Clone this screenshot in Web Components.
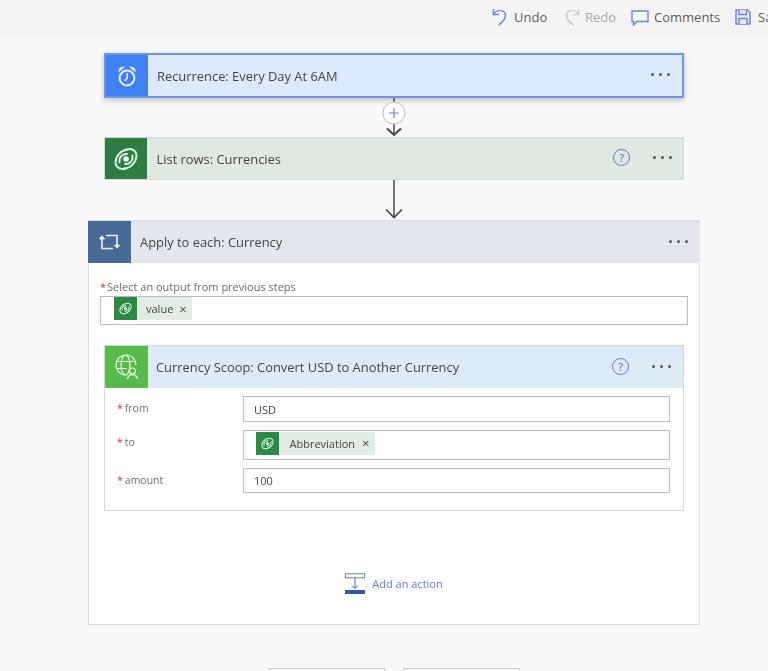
<!DOCTYPE html>
<html lang="en"><head><meta charset="utf-8"><title>Flow</title>
<style>
html,body{margin:0;height:671px;overflow:hidden;background:#f9f9f9;font-family:"Open Sans","Noto Sans",sans-serif;color:#4a4a4a}
</style></head><body>
<flow-app>
  <flow-toolbar slot="bar"></flow-toolbar>
  <flow-card color="#dfe9fd" tile="#4080f5" title-text="Recurrence: Every Day At 6AM" selected icon="clock"></flow-card>
  <flow-connector plus></flow-connector>
  <flow-card color="#deeae1" tile="#2b7d41" title-text="List rows: Currencies" help icon="dv"></flow-card>
  <flow-connector></flow-connector>
  <flow-scope>
    <flow-field-label>Select an output from previous steps</flow-field-label>
    <flow-input wide><flow-token tight>value</flow-token></flow-input>
    <flow-card slot="inner" color="#dfeaf8" tile="#56bb4b" title-text="Currency Scoop: Convert USD to Another Currency" help icon="globe" flat>
      <flow-form>
        <flow-row label="from" top="8"><flow-input h="26">USD</flow-input></flow-row>
        <flow-row label="to" top="8"><flow-input h="30" token><flow-token>Abbreviation</flow-token></flow-input></flow-row>
        <flow-row label="amount" top="8"><flow-input h="25">100</flow-input></flow-row>
      </flow-form>
    </flow-card>
    <flow-add slot="add"></flow-add>
  </flow-scope>
  <flow-footer></flow-footer>
</flow-app>
<script>
const ICONS={
clock:`<svg width="24" height="24" viewBox="0 0 24 24" fill="none" stroke="#e4efff" stroke-width="2"><circle cx="12" cy="14" r="7.4"/><path d="M12.2 9V14.3L9.6 17" stroke-width="1.5"/><path d="M4.4 6.6C4.6 4.8 6 3.6 7.8 3.6ZM19.6 6.6C19.4 4.8 18 3.6 16.2 3.6Z" stroke-width="1.6" fill="#e4efff"/></svg>`,
dv:`<svg width="100%" height="100%" viewBox="0 0 28 28" fill="none" stroke="#dff2e4" stroke-width="1.9" stroke-linecap="round"><path d="M13.5 23.5C8.5 25 3.5 22.5 3.5 17.5C3.5 11.5 9 5 15.5 4.5"/><path d="M14.5 4.5C19.5 3 24.5 5.5 24.5 10.5C24.5 16.5 19 23 12.5 23.5"/><path d="M7.5 17.5C6.5 12.5 10.5 8.5 15 9"/><path d="M20.5 10.5C21.5 15.5 17.5 19.5 13 19"/><circle cx="14" cy="14" r="2.8" fill="#f2fbf4" stroke="none"/></svg>`,
globe:`<svg width="26" height="26" viewBox="0 0 26 26" fill="none" stroke="#e6f6e2" stroke-width="1.2"><path d="M12 21A10 10 0 1 1 22 11"/><ellipse cx="11.5" cy="11" rx="4.5" ry="10"/><path d="M2 7.5H21M2 14.5H13"/><circle cx="18.5" cy="17" r="3"/><path d="M13.5 25C14 22 16 20.7 18.5 20.7S23 22 23.5 25"/></svg>`,
loop:`<svg width="22" height="18" viewBox="0 0 22 18" fill="none" stroke="#eef2f8" stroke-width="1.6"><path d="M3 4V15.5H14"/><path d="M7 2.5H18V14"/><path d="M.4 6 3 2.8 5.6 6H.4ZM15.4 12 18 15.2 20.6 12H15.4Z" stroke-width=".8" fill="#eef2f8"/></svg>`
};
function def(name,css,html){customElements.define(name,class extends HTMLElement{
  constructor(){super();this.attachShadow({mode:"open"})}
  connectedCallback(){const a=n=>this.getAttribute(n);const h=typeof html==="function"?html(a,this):html;
    this.shadowRoot.innerHTML=`<style>${typeof css==="function"?css(a,this):css}</style>${h}`}
})}
const dots=`<span class="dots"><i></i><i></i><i></i></span>`;
const dotCss=`.dots{display:flex;gap:5px;margin:-2px 12px 0 0}.dots i{width:3px;height:3px;border-radius:50%;background:#555}`;
def("flow-app",`:host{display:flex;flex-direction:column;height:671px;overflow:hidden;filter:blur(.35px)}
 .main{margin-left:88px;width:612px;display:flex;flex-direction:column;align-items:center;padding-top:14px}`,
 `<slot name="bar"></slot><div class="main"><slot></slot></div>`);
def("flow-toolbar",`:host{display:flex;height:39px;background:#f4f4f4;flex:none;overflow:hidden;font-size:13px;color:#5c5c5c;align-items:center;padding-left:491px;padding-bottom:5px;box-sizing:border-box;width:768px;white-space:nowrap}
 .i{display:flex;align-items:center;flex:none}svg{display:block;flex:none}.off{color:#a8a8a8}`,
 `<span class="i" style="width:73px"><svg width="17" height="18" viewBox="0 0 17 18" fill="none" stroke="#7186d4" stroke-width="1.5"><path d="M2.5 1V6.5H8"/><path d="M2.5 6C5.5 2.5 9.5 1.5 12.5 3.5C16 6 15 12 7.5 17"/></svg><span style="margin-left:6px">Undo</span></span>
 <span class="i off" style="width:67px"><svg width="17" height="18" viewBox="0 0 17 18" fill="none" stroke="#cbcbcb" stroke-width="1.4"><path d="M14.5 1V6.5H9"/><path d="M14.5 6C11.5 2.5 7.5 1.5 4.5 3.5C1 6 2 12 9.5 17"/></svg><span style="margin-left:4px">Redo</span></span>
 <span class="i" style="width:104px"><svg width="18" height="17" viewBox="0 0 18 17" fill="none" stroke="#7186d4" stroke-width="1.4"><path d="M1 2H17V12.5H6L2.5 16V12.5H1Z"/></svg><span style="margin-left:5px">Comments</span></span>
 <span class="i"><svg width="16" height="16" viewBox="0 0 16 16" fill="#e4e8f8" stroke="#6f84d2" stroke-width="1.4"><path d="M1 1H12.5L15 3.5V15H1Z"/><path d="M4 1.2V5.5H11.5V1.2M4 15V9.5H12V15"/></svg><span style="margin-left:7px">Save</span></span>`);
def("flow-card",(a)=>`:host{display:block;flex:none;width:580px;box-sizing:border-box;background:#fff;${a("flat")!==null?"border:1px solid #d8d8d8;":""}}
 .h{display:flex;align-items:center;height:${a("selected")!==null?45:a("flat")!==null?42:43}px;background:${a("color")};box-sizing:border-box;
 ${a("selected")!==null?"border:2px solid #6f95e6;box-shadow:0 2px 6px rgba(0,0,0,.25);":a("flat")!==null?"":"outline:1px solid #d4d8d4;outline-offset:-1px;"}}
 .t{flex:none;width:${a("selected")!==null?42:43}px;height:100%;background:${a("tile")};display:flex;align-items:center;justify-content:center}
 .dvw{width:28px;height:28px}
 .n{flex:1;margin-left:${a("selected")!==null?9:a("flat")!==null?8:9.5}px;font-size:12.9px;color:#444}
 .q{width:15px;height:15px;border:1.2px solid #5f78d0;border-radius:50%;color:#4f68c4;font-size:11px;line-height:15px;text-align:center;margin:-2px 23px 0 0}
 ${dotCss}`,
 (a)=>`<div class="h"><div class="t"><span class="${a("icon")==="dv"?"dvw":""}" style="display:flex">${ICONS[a("icon")]}</span></div><div class="n">${a("title-text")}</div>${a("help")!==null?'<div class="q">?</div>':""}${dots}</div><slot></slot>`);
def("flow-connector",(a)=>`:host{display:block;flex:none;width:30px;height:${a("plus")!==null?39:40}px}svg{display:block}`,
 (a)=>a("plus")!==null?`<svg width="30" height="39" viewBox="0 0 30 39"><path d="M15 0V37" stroke="#555" stroke-width="1.6"/><path d="M8 30.5 15 37 22 30.5" fill="none" stroke="#444" stroke-width="2"/><circle cx="15" cy="15" r="11" fill="#fff" stroke="#bbb"/><path d="M10 15H20M15 10V20" stroke="#6c86cc" stroke-width="1.2"/></svg>`
 :`<svg width="30" height="40" viewBox="0 0 30 40"><path d="M15 0V37" stroke="#555" stroke-width="1.6"/><path d="M7 29.5 15 37.5 23 29.5" fill="none" stroke="#444" stroke-width="1.6"/></svg>`);
def("flow-scope",`:host{display:block;flex:none;width:612px;height:405px;box-sizing:border-box;background:#fff;border:1px solid #dcdcdc;border-top:0}
 .h{display:flex;align-items:center;height:43px;background:#e3e6ee;margin:0 -1px;border-top:1px solid #d8dae0;box-sizing:border-box}
 .t{flex:none;width:43px;height:100%;background:#486a97;display:flex;align-items:center;justify-content:center}
 .n{flex:1;margin-left:9px;font-size:12.9px;color:#444}
 ${dotCss}
 .b{padding:17px 11px 0 11px}.in{margin:20px 4px 0 4px}.add{display:flex;justify-content:center;margin-top:62px}`,
 `<div class="h"><div class="t">${ICONS.loop}</div><div class="n">Apply to each: Currency</div>${dots}</div>
 <div class="b"><slot></slot><div class="in"><slot name="inner"></slot></div></div><div class="add"><slot name="add"></slot></div>`);
def("flow-field-label",`:host{display:block;font-size:11px;line-height:15px;color:#6a6a6a;white-space:nowrap;margin-top:-1px}b{color:#c33;font-weight:400;margin-right:1px}`,`<b>*</b><slot></slot>`);
def("flow-input",(a)=>`:host{display:flex;align-items:center;box-sizing:border-box;height:${a("wide")!==null?"29px":(a("h")||26)+"px"};${a("wide")!==null?"padding-left:13px;margin-top:2px;":"padding-left:"+(a("token")!==null?"12px":"10px")+";"}
 border:1px solid #bdbdbd;background:#fff;font-size:11px;color:#444}`,`<slot></slot>`);
def("flow-token",(a)=>`:host{display:flex;align-items:center;height:23px;background:#e1ece4;font-size:11px;color:#444;white-space:nowrap;margin-top:-4px}
 .t{width:23px;height:23px;background:#2b8a45;display:flex;align-items:center;justify-content:center}.t span{width:15px;height:15px;display:flex}
 .l{margin-left:${a("tight")!==null?9:10.5}px}.x{margin:0 ${a("tight")!==null?5:6}px 0 ${a("tight")!==null?6:7}px;font-size:13px;line-height:12px}`,
 `<span class="t"><span>${ICONS.dv}</span></span><span class="l"><slot></slot></span><span class="x">×</span>`);
def("flow-form",`:host{display:block;padding:0 13px 17px 12px;height:122px;box-sizing:border-box}`,`<slot></slot>`);
def("flow-row",(a)=>`:host{display:grid;grid-template-columns:126px 1fr;padding-top:${a("top")}px}
 .l{font-size:10.5px;color:#6a6a6a;padding-top:4.5px}b{color:#c33;font-weight:400;margin-right:2px}`,
 (a)=>`<div class="l"><b>*</b>${a("label")}</div><slot></slot>`);
def("flow-add",`:host{display:flex;align-items:center;gap:7px;color:#6378c8;font-size:11px}svg{display:block}`,
 `<svg width="20" height="21" viewBox="0 0 20 21" fill="none"><rect x=".5" y=".8" width="19" height="4" stroke="#6b7fa8"/><path d="M10 5V15M7 12.5 10 15.5 13 12.5" stroke="#3a66b0"/><rect y="17" width="20" height="4" fill="#2a5ba8"/></svg><span>Add an action</span>`);
def("flow-footer",`:host{display:flex;gap:18px;flex:none;margin-top:43px;width:612px;padding-left:180px;box-sizing:border-box}
 i{display:block;box-sizing:border-box;width:117px;height:10px;border:1px solid #cfcfcf;background:#fbfbfb;flex:none}`,`<i></i><i></i>`);
</script>
</body></html>
